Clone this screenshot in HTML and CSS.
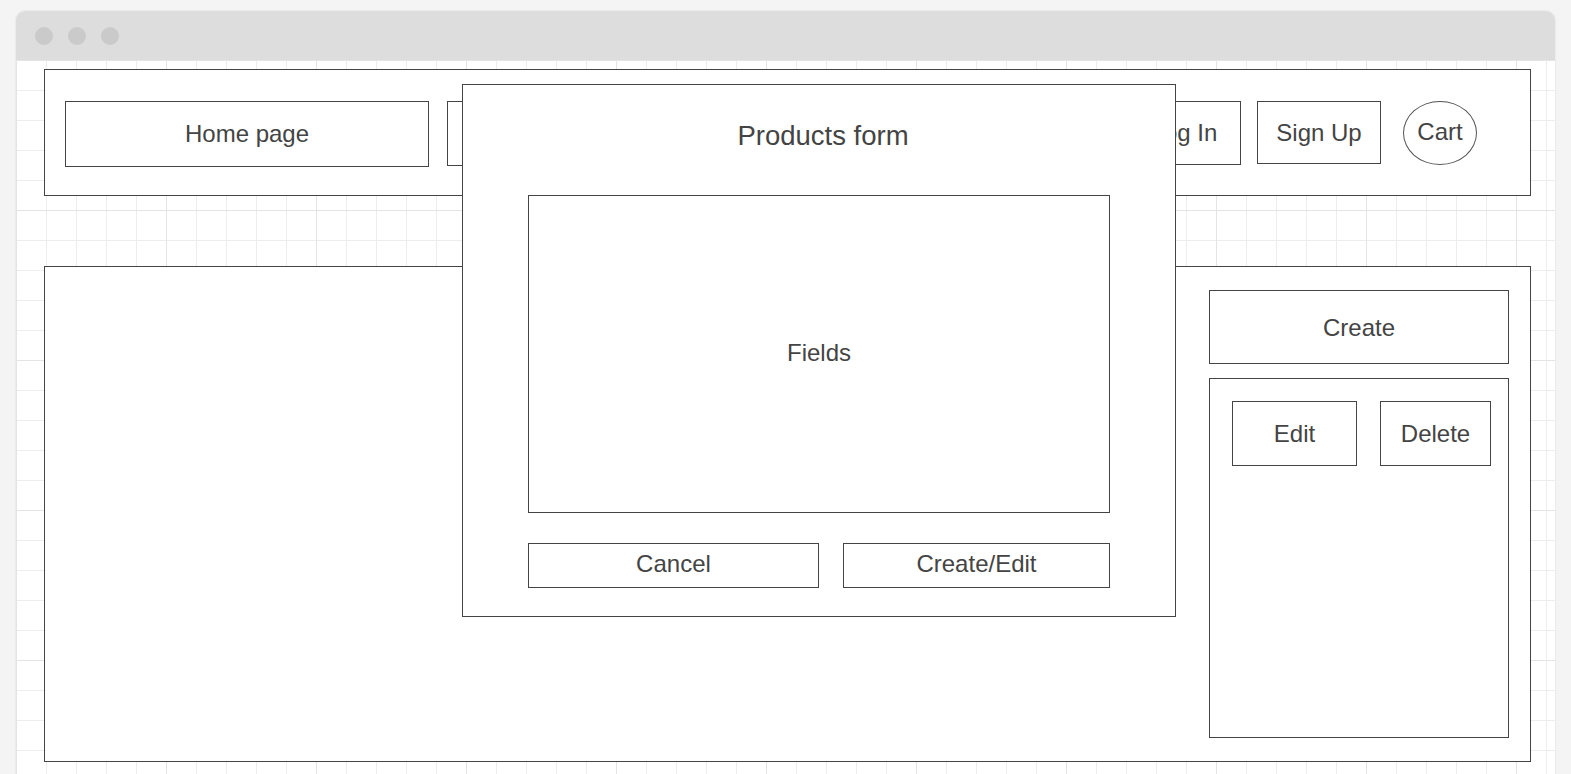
FILE: index.html
```html
<!DOCTYPE html>
<html lang="en">
<head>
<meta charset="utf-8">
<title>Products form wireframe</title>
<link rel="stylesheet" href="styles.css">
</head>
<body>
<div class="window">
  <div class="titlebar">
    <span class="dot"></span><span class="dot"></span><span class="dot"></span>
  </div>
  <div class="canvas">
    <header class="header">
      <div class="box btn-home">Home page</div>
      <div class="box btn-products">Products</div>
      <div class="box btn-login">Log In</div>
      <div class="box btn-signup">Sign Up</div>
      <div class="cart">Cart</div>
    </header>
    <main class="main">
      <aside class="sidebar">
        <div class="box btn-create">Create</div>
        <div class="list">
          <div class="box btn-edit">Edit</div>
          <div class="box btn-delete">Delete</div>
        </div>
      </aside>
    </main>
    <section class="modal">
      <h1 class="modal-title">Products form</h1>
      <div class="box fields">Fields</div>
      <div class="actions">
        <div class="box btn-cancel">Cancel</div>
        <div class="box btn-submit">Create/Edit</div>
      </div>
    </section>
  </div>
</div>
</body>
</html>
```

FILE: styles.css
```css
* { box-sizing: border-box; }
html {
  margin: 0;
  padding: 0;
  overflow: hidden;
}
body {
  margin: 0;
  padding: 11px 0 0 16px;
  background: #f4f4f4;
  font-family: "Liberation Sans", Arial, sans-serif;
  color: #444;
  height: 774px;
  overflow: hidden;
}
.window {
  width: 1539px;
  height: 765px;
  border-radius: 9px 9px 0 0;
  overflow: hidden;
  box-shadow: 0 0 2px rgba(0,0,0,0.12);
  background: #fff;
}
.titlebar {
  height: 49px;
  background: #dddddd;
  display: flex;
  align-items: center;
  gap: 15px;
  padding-left: 19px;
}
.dot {
  width: 18px;
  height: 18px;
  border-radius: 50%;
  background: #cacaca;
}
.canvas {
  position: relative;
  height: 716px;
  padding: 9px 0 0 28px;
  background-color: #fff;
  background-image:
    linear-gradient(to right, #e4e4e4 1px, transparent 1px),
    linear-gradient(to bottom, #e4e4e4 1px, transparent 1px),
    linear-gradient(to right, #ededed 1px, transparent 1px),
    linear-gradient(to bottom, #ededed 1px, transparent 1px);
  background-size: 150px 150px, 150px 150px, 30px 30px, 30px 30px;
}
.box {
  border: 1px solid #444;
  background: #fff;
  display: flex;
  align-items: center;
  justify-content: center;
  font-size: 24px;
  color: #444;
}
.header {
  width: 1487px;
  height: 127px;
  border: 1px solid #444;
  background: #fff;
  display: flex;
  align-items: flex-start;
  padding: 31px 0 0 20px;
}
.btn-home { width: 364px; height: 66px; }
.btn-products { width: 360px; height: 65px; margin-left: 18px; }
.btn-login { width: 114px; height: 64px; margin-left: auto; }
.btn-signup { width: 124px; height: 63px; margin-left: 16px; }
.cart {
  width: 74px;
  height: 64px;
  margin: 0 53px 0 22px;
  border: 1px solid #555;
  border-radius: 50%;
  background: #fff;
  display: flex;
  align-items: center;
  justify-content: center;
  font-size: 24px;
  padding-bottom: 2px;
}
.main {
  margin-top: 70px;
  width: 1487px;
  height: 496px;
  border: 1px solid #444;
  background: #fff;
  display: flex;
  justify-content: flex-end;
  padding: 23px 21px 23px 0;
}
.sidebar {
  width: 300px;
  display: flex;
  flex-direction: column;
  gap: 14px;
}
.btn-create { height: 74px; padding-top: 2px; }
.list {
  flex: 1;
  border: 1px solid #444;
  display: flex;
  align-items: flex-start;
  gap: 23px;
  padding: 22px 0 0 22px;
}
.btn-edit { width: 125px; height: 65px; }
.btn-delete { width: 111px; height: 65px; }
.modal {
  position: absolute;
  left: 446px;
  top: 24px;
  width: 714px;
  height: 533px;
  border: 1px solid #444;
  background: #fff;
  padding: 35px 65px 0 65px;
  display: flex;
  flex-direction: column;
}
.modal-title {
  margin: 0;
  font-weight: normal;
  font-size: 27.5px;
  line-height: 32px;
  text-align: center;
  padding-left: 8px;
  color: #444;
}
.fields {
  margin-top: 43px;
  height: 318px;
  padding-bottom: 2px;
}
.actions {
  margin-top: 30px;
  display: flex;
  gap: 24px;
}
.btn-cancel { width: 292px; height: 45px; padding-bottom: 3px; }
.btn-submit { width: 268px; height: 45px; padding-bottom: 3px; }
```
